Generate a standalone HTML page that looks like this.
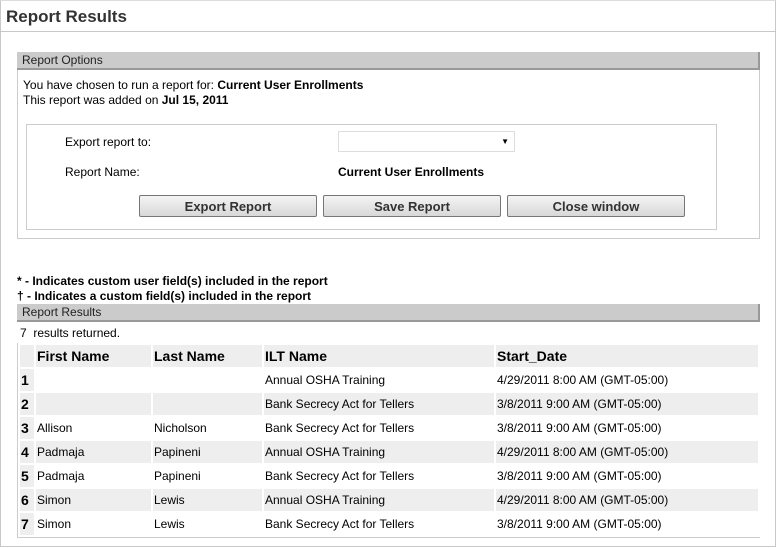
<!DOCTYPE html>
<html><head><style>
body{margin:0;width:776px;height:548px;background:#fff;font-family:"Liberation Sans",Arial,sans-serif;font-size:12px;color:#000;position:relative;overflow:hidden}
.abs{position:absolute}
.btn{position:absolute;top:195px;height:22px;border:1px solid #777;border-radius:2px;background:linear-gradient(#f4f4f4,#d8d8d8);font-size:13px;font-weight:bold;color:#333;text-align:center;line-height:21px;box-sizing:border-box}
.bar{position:absolute;left:17px;width:743px;height:18px;background:#cbcbcb;border-right:2px solid #999;border-bottom:2px solid #999;box-sizing:border-box;padding-left:5px;line-height:16px;color:#222}
table{position:absolute;left:17px;top:343px;width:743px;border-collapse:separate;border-spacing:2px;border-left:1px solid #ccc;border-bottom:1px solid #ccc}
td,th{height:22px;padding:0 1px;text-align:left;white-space:nowrap}
th{font-size:14px;background:#eee}
td.n{background:#eee;font-weight:bold;font-size:14px;width:12px}
tr.g td{background:#eee}
</style></head><body>
<div class="abs" style="left:0;top:0;width:774px;height:545px;border:1px solid #c8c8c8;border-top-color:#ddd"></div>
<div class="abs" style="left:0;top:31px;width:776px;height:1px;background:#c8c8c8"></div>
<div class="abs" style="left:6px;top:7px;font-size:17px;font-weight:bold;color:#333">Report Results</div>
<div class="abs" style="left:17px;top:52px;width:741px;height:185px;border:1px solid #ccc"></div>
<div class="bar" style="top:52px">Report Options</div>
<div class="abs" style="left:23px;top:78px;line-height:15px">You have chosen to run a report for: <b>Current User Enrollments</b><br>This report was added on <b>Jul 15, 2011</b></div>
<div class="abs" style="left:26px;top:124px;width:689px;height:104px;border:1px solid #ccc"></div>
<div class="abs" style="left:65px;top:135px">Export report to:</div>
<div class="abs" style="left:338px;top:131px;width:177px;height:21px;border:1px solid #ddd;box-sizing:border-box"><span class="abs" style="right:5px;top:5px;font-size:8px">▼</span></div>
<div class="abs" style="left:65px;top:165px">Report Name:</div>
<div class="abs" style="left:338px;top:165px;font-weight:bold">Current User Enrollments</div>
<div class="btn" style="left:139px;width:178px">Export Report</div>
<div class="btn" style="left:323px;width:178px">Save Report</div>
<div class="btn" style="left:507px;width:178px">Close window</div>
<div class="abs" style="left:17px;top:274px;font-weight:bold;line-height:15px">* - Indicates custom user field(s) included in the report<br>† - Indicates a custom field(s) included in the report</div>
<div class="bar" style="top:304px">Report Results</div>
<div class="abs" style="left:20px;top:326px">7&nbsp; results returned.</div>
<table>
<tr><th style="width:12px"></th><th style="width:113px">First Name</th><th style="width:107px">Last Name</th><th style="width:228px">ILT Name</th><th>Start_Date</th></tr>
<tr><td class="n">1</td><td></td><td></td><td>Annual OSHA Training</td><td>4/29/2011 8:00 AM (GMT-05:00)</td></tr>
<tr class="g"><td class="n">2</td><td></td><td></td><td>Bank Secrecy Act for Tellers</td><td>3/8/2011 9:00 AM (GMT-05:00)</td></tr>
<tr><td class="n">3</td><td>Allison</td><td>Nicholson</td><td>Bank Secrecy Act for Tellers</td><td>3/8/2011 9:00 AM (GMT-05:00)</td></tr>
<tr class="g"><td class="n">4</td><td>Padmaja</td><td>Papineni</td><td>Annual OSHA Training</td><td>4/29/2011 8:00 AM (GMT-05:00)</td></tr>
<tr><td class="n">5</td><td>Padmaja</td><td>Papineni</td><td>Bank Secrecy Act for Tellers</td><td>3/8/2011 9:00 AM (GMT-05:00)</td></tr>
<tr class="g"><td class="n">6</td><td>Simon</td><td>Lewis</td><td>Annual OSHA Training</td><td>4/29/2011 8:00 AM (GMT-05:00)</td></tr>
<tr><td class="n">7</td><td>Simon</td><td>Lewis</td><td>Bank Secrecy Act for Tellers</td><td>3/8/2011 9:00 AM (GMT-05:00)</td></tr>
</table>
</body></html>
